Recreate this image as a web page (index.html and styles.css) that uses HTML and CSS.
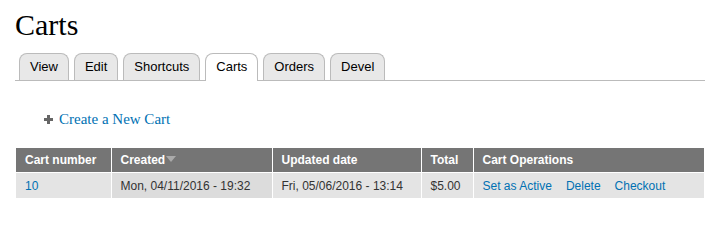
FILE: index.html
```html
<!DOCTYPE html>
<html lang="en">
<head>
    <meta charset="UTF-8">
    <title>Carts</title>
    <link rel="stylesheet" href="styles.css">
</head>
<body>
    <div class="page">
        <h1 class="title">Carts</h1>
        <ul class="tabs">
            <li class="tab"><a href="#">View</a></li>
            <li class="tab"><a href="#">Edit</a></li>
            <li class="tab"><a href="#">Shortcuts</a></li>
            <li class="tab active"><a href="#">Carts</a></li>
            <li class="tab"><a href="#">Orders</a></li>
            <li class="tab"><a href="#">Devel</a></li>
        </ul>

        <ul class="action-links">
            <li><a href="#">Create a New Cart</a></li>
        </ul>

        <table class="carts">
            <colgroup>
                <col class="col-num">
                <col class="col-created">
                <col class="col-updated">
                <col class="col-total">
                <col class="col-ops">
            </colgroup>
            <thead>
                <tr>
                    <th>Cart number</th>
                    <th>Created<span class="sort-arrow"></span></th>
                    <th>Updated date</th>
                    <th>Total</th>
                    <th>Cart Operations</th>
                </tr>
            </thead>
            <tbody>
                <tr>
                    <td><a href="#">10</a></td>
                    <td class="sorted">Mon, 04/11/2016 - 19:32</td>
                    <td>Fri, 05/06/2016 - 13:14</td>
                    <td>$5.00</td>
                    <td class="ops"><a href="#">Set as Active</a><a href="#">Delete</a><a href="#">Checkout</a></td>
                </tr>
            </tbody>
        </table>
    </div>
</body>
</html>
```

FILE: styles.css
```css
body {
    margin: 0;
    font-family: "Liberation Sans", Arial, sans-serif;
    font-size: 13px;
    color: #333;
    background: #fff;
}
a {
    color: #0071b3;
    text-decoration: none;
}
.page {
    padding: 0 22px 0 15px;
}
.title {
    margin: 0;
    padding-top: 7px;
    font-family: "Liberation Serif", Georgia, serif;
    font-size: 30px;
    font-weight: normal;
    line-height: 36px;
    color: #000;
}
.tabs {
    display: flex;
    gap: 5px;
    margin: 10px 0 0;
    padding: 0 0 0 4px;
    list-style: none;
    border-bottom: 1px solid #bbb;
    height: 27px;
}
.tab a {
    display: block;
    height: 26px;
    line-height: 25px;
    padding: 0 10px;
    margin-bottom: -1px;
    border: 1px solid #bbb;
    border-bottom: none;
    border-radius: 8px 8px 0 0;
    background: #e8e8e8;
    color: #000;
    font-size: 13px;
}
.tab.active a {
    background: #fff;
    height: 27px;
}
.action-links {
    list-style: none;
    margin: 29px 0 0;
    padding: 0 0 0 29px;
}
.action-links a {
    display: flex;
    align-items: center;
    font-family: "Liberation Serif", Georgia, serif;
    font-size: 15px;
    line-height: 18px;
}
.action-links a::before {
    content: "";
    width: 9px;
    height: 9px;
    margin-right: 6px;
    background:
        linear-gradient(#666, #666) center / 9px 3px no-repeat,
        linear-gradient(#666, #666) center / 3px 9px no-repeat;
}
.carts {
    margin: 20px 0 0 1px;
    width: 688px;
    table-layout: fixed;
    border-collapse: collapse;
    border-spacing: 0;
    white-space: nowrap;
    font-size: 12px;
}
.col-num { width: 95px; }
.col-created { width: 161px; }
.col-updated { width: 149px; }
.col-total { width: 52px; }
.col-ops { width: 231px; }
.carts th {
    background: #757575;
    color: #fff;
    font-weight: bold;
    text-align: left;
    height: 24px;
    padding: 0 9px;
    border-right: 1px solid #fff;
    border-bottom: 1px solid #fff;
}
.carts td {
    background: #e4e4e4;
    height: 25px;
    padding: 0 9px;
    border-right: 1px solid #fff;
    color: #333;
}
.carts th:last-child,
.carts td:last-child {
    border-right: none;
}
.carts td.sorted {
    background: #dcdcdc;
}
.sort-arrow {
    display: inline-block;
    width: 0;
    height: 0;
    margin-left: 1px;
    border-left: 5px solid transparent;
    border-right: 5px solid transparent;
    border-top: 6px solid #aaa;
    vertical-align: 2px;
}
.ops a {
    margin-right: 14px;
}
```
